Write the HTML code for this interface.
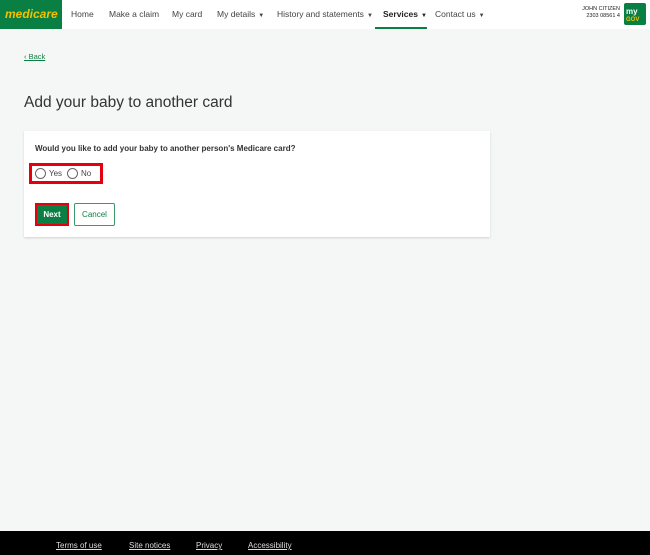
<!DOCTYPE html>
<html><head><style>
*{margin:0;padding:0;box-sizing:border-box}
body{width:650px;height:555px;background:#f4f7f6;font-family:"Liberation Sans",sans-serif;position:relative;overflow:hidden}
.hd{position:absolute;left:0;top:0;width:650px;height:29px;background:#fff}
.logo{position:absolute;left:0;top:0;width:62px;height:29px;background:#0a7f43;color:#f2c200;font-weight:bold;font-style:italic;font-size:12px;line-height:29px;padding-left:5px}
.n{position:absolute;top:9px;font-size:8.5px;color:#444}
.n i{font-style:normal;font-size:6px;margin-left:3px}
.ul{position:absolute;left:375px;top:27px;width:52px;height:2px;background:#0a7f43}
.usr{position:absolute;right:30px;top:6px;font-size:5.5px;color:#222;text-align:right;line-height:7px}
.mg{position:absolute;left:624px;top:3px;width:22px;height:22px;background:#0a7f43;border-radius:2px;color:#fff;font-weight:bold;font-size:8px;line-height:7px;padding:5px 0 0 2px}
.mg span{color:#f2c200;font-size:6px}
.back{position:absolute;left:24px;top:52px;font-size:7.5px;color:#0a7f43;text-decoration:underline}
h1{position:absolute;left:24px;top:94px;font-size:15.5px;font-weight:normal;color:#333}
.card{position:absolute;left:24px;top:131px;width:466px;height:106px;background:#fff;box-shadow:0 1px 2px rgba(0,0,0,.15)}
.q{position:absolute;left:11px;top:13px;font-size:8px;color:#333;font-weight:bold}
.rb{position:absolute;left:5px;top:32px;width:74px;height:21px;border:3px solid #e50010}
.r{position:absolute;top:2px;width:11px;height:11px;border:1.3px solid #666;border-radius:50%}
.rl{position:absolute;top:3px;font-size:8px;color:#444}
.nx{position:absolute;left:11px;top:72px;width:34px;height:23px;background:#0a7f43;border:2px solid #e50010;color:#fff;font-size:8px;font-weight:bold;text-align:center;line-height:19px}
.cc{position:absolute;left:50px;top:72px;width:41px;height:23px;border:1px solid #3a9a6a;border-radius:2px;color:#0a7f43;font-size:8px;text-align:center;line-height:21px}
.ft{position:absolute;left:0;top:531px;width:650px;height:24px;background:#000}
.ft a{position:absolute;top:10px;font-size:8px;color:#ddd;text-decoration:underline}
</style></head><body>
<div class="hd">
<div class="logo">medicare</div>
<div class="n" style="left:71px">Home</div>
<div class="n" style="left:109px">Make a claim</div>
<div class="n" style="left:172px">My card</div>
<div class="n" style="left:217px">My details<i>▼</i></div>
<div class="n" style="left:277px">History and statements<i>▼</i></div>
<div class="n" style="left:383px;color:#222;font-weight:bold">Services<i>▼</i></div>
<div class="n" style="left:435px">Contact us<i>▼</i></div>
<div class="ul"></div>
<div class="usr">JOHN CITIZEN<br>2303 08561 4</div>
<div class="mg">my<br><span>GOV</span></div>
</div>
<div class="back">‹ Back</div>
<h1>Add your baby to another card</h1>
<div class="card">
<div class="q">Would you like to add your baby to another person's Medicare card?</div>
<div class="rb">
<div class="r" style="left:3px"></div><div class="rl" style="left:17px">Yes</div>
<div class="r" style="left:35px"></div><div class="rl" style="left:49px">No</div>
</div>
<div class="nx">Next</div>
<div class="cc">Cancel</div>
</div>
<div class="ft">
<a style="left:56px">Terms of use</a><a style="left:129px">Site notices</a><a style="left:196px">Privacy</a><a style="left:248px">Accessibility</a>
</div>
</body></html>
